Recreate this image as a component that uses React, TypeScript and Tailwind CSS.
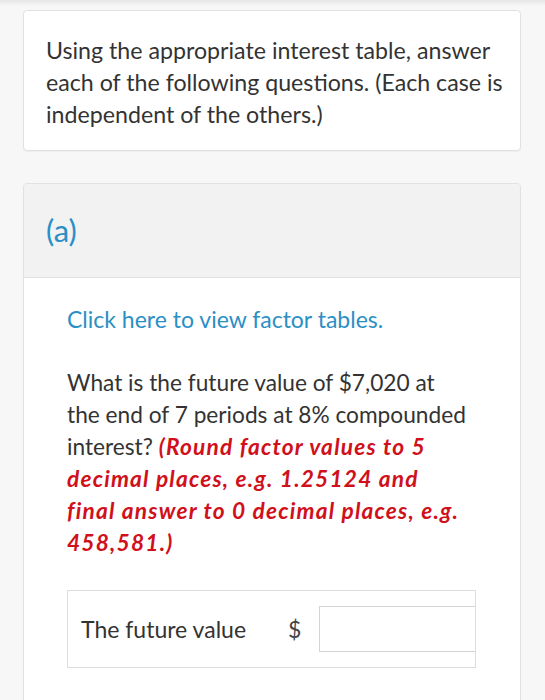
export default function App() {
  return (
    <div className="min-h-[700px] bg-[#f7f7f7] font-['Lato',sans-serif] text-[#333]">
      <div className="h-[6px] bg-gradient-to-b from-[#e6e6e6] to-[#f7f7f7]" />
      <div className="px-[23px] pr-[24px] pt-[4px]">
        <div className="rounded-[4px] border border-[#e1e1e1] bg-white shadow-[0_1px_1px_rgba(0,0,0,0.04)] pl-[22px] pr-[10px] pt-[23px] pb-[20px]">
          <p className="text-[23.2px] leading-[32px] whitespace-nowrap">
            Using the appropriate interest table, answer
            <br />
            each of the following questions. (Each case is
            <br />
            independent of the others.)
          </p>
        </div>

        <div className="mt-[32px] rounded-[4px] border border-[#e1e1e1] bg-white overflow-hidden">
          <div className="h-[94px] bg-[#f2f2f2] border-b border-[#e1e1e1] flex items-center pl-[22px]">
            <span className="text-[31px] text-[#2a8fc4]">(a)</span>
          </div>
          <div className="pl-[43px] pr-[44px] pt-[25px] pb-[60px]">
            <p className="text-[23px] leading-[32px] text-[#2a8fc4]">Click here to view factor tables.</p>
            <p className="mt-[32px] text-[22.7px] leading-[32px] whitespace-nowrap">
              What is the future value of $7,020 at
              <br />
              the end of 7 periods at 8% compounded
              <br />
              interest?{" "}
              <span className="font-bold italic tracking-[1.2px] text-[#d0101b]">
                (Round factor values to 5
                <br />
                decimal places, e.g. 1.25124 and
                <br />
                final answer to 0 decimal places, e.g.
                <br />
                458,581.)
              </span>
            </p>
            <div className="mt-[31px] h-[78px] border border-[#dddddd] flex items-center pl-[13px] overflow-hidden">
              <span className="w-[207px] shrink-0 text-[23px]">The future value</span>
              <span className="w-[12px] shrink-0 text-[23px] text-[#444]">$</span>
              <input
                type="text"
                className="ml-[19px] h-[46px] w-[200px] shrink-0 border border-[#d3d3d3] bg-white outline-none"
              />
            </div>
          </div>
        </div>
      </div>
    </div>
  );
}
